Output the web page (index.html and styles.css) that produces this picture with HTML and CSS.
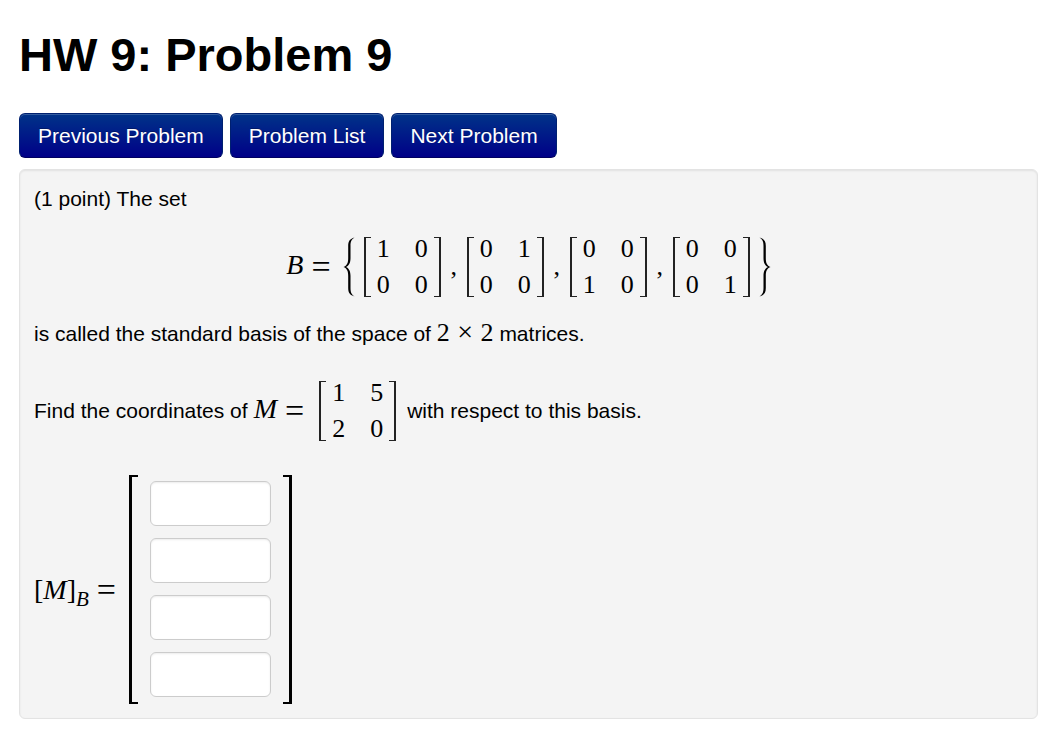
FILE: index.html
```html
<!DOCTYPE html>
<html lang="en">
<head>
    <meta charset="UTF-8">
    <meta name="viewport" content="width=device-width, initial-scale=1.0">
    <title>HW 9: Problem 9</title>
    <link rel="stylesheet" href="styles.css">
</head>
<body>
    <h1>HW 9: Problem 9</h1>

    <nav class="problem-nav">
        <button type="button" class="nav-btn">Previous Problem</button>
        <button type="button" class="nav-btn">Problem List</button>
        <button type="button" class="nav-btn">Next Problem</button>
    </nav>

    <form class="problem">
        <p>(1 point) The set</p>

        <div class="math display">
            <i class="var">B</i><span class="eq">=</span>
            <svg class="brace" viewBox="0 0 12 60"><path d="M11.500 0.600C7 2 5.200 4 5.200 9V21C5.200 26 4 28.500 0.500 30C4 31.500 5.200 34 5.200 39V51C5.200 56 7 58 11.500 59.400C8.600 57.500 7.500 55.500 7.500 51V39C7.500 34 6 31.500 3 30C6 28.500 7.500 26 7.500 21V9C7.500 4.500 8.600 2.500 11.500 0.600Z"/></svg>
            <span class="matrix"><span>1</span><span>0</span><span>0</span><span>0</span></span>
            <span class="comma">,</span>
            <span class="matrix"><span>0</span><span>1</span><span>0</span><span>0</span></span>
            <span class="comma">,</span>
            <span class="matrix"><span>0</span><span>0</span><span>1</span><span>0</span></span>
            <span class="comma">,</span>
            <span class="matrix"><span>0</span><span>0</span><span>0</span><span>1</span></span>
            <svg class="brace close" viewBox="0 0 12 60"><path d="M11.500 0.600C7 2 5.200 4 5.200 9V21C5.200 26 4 28.500 0.500 30C4 31.500 5.200 34 5.200 39V51C5.200 56 7 58 11.500 59.400C8.600 57.500 7.500 55.500 7.500 51V39C7.500 34 6 31.500 3 30C6 28.500 7.500 26 7.500 21V9C7.500 4.500 8.600 2.500 11.500 0.600Z"/></svg>
        </div>

        <p>is called the standard basis of the space of <span class="math">2 <span class="times">×</span> 2</span> matrices.</p>

        <div class="line">
            <span>Find the coordinates of</span>
            <span class="math inline"><i class="var">M</i><span class="eq">=</span><span class="matrix"><span>1</span><span>5</span><span>2</span><span>0</span></span></span>
            <span class="after">with respect to this basis.</span>
        </div>

        <div class="math answer">
            <span class="answer-name">[<i class="var">M</i>]<sub><i>B</i></sub></span><span class="eq">=</span>
            <div class="vector">
                <input type="text" aria-label="Row 1">
                <input type="text" aria-label="Row 2">
                <input type="text" aria-label="Row 3">
                <input type="text" aria-label="Row 4">
            </div>
        </div>
    </form>
</body>
</html>
```
FILE: styles.css
```css
*,
*::before,
*::after {
    box-sizing: border-box;
}

body {
    margin: 0;
    padding: 25px 19px 19px;
    background-color: #fff;
    color: #000;
    font-family: "Liberation Sans", Arial, sans-serif;
    font-size: 21px;
    line-height: 30px;
}

h1 {
    margin: 0 0 28px;
    font-size: 47px;
    line-height: 60px;
}

.problem-nav {
    display: flex;
    flex-wrap: wrap;
    gap: 7px;
    margin-bottom: 11px;
}

.nav-btn {
    padding: 6px 18px;
    border: 1px solid #002070;
    border-bottom-color: #000060;
    border-radius: 6px;
    background: linear-gradient(#003388, #000088);
    box-shadow: inset 0 1px 0 rgba(255, 255, 255, 0.2);
    color: #fff;
    font-family: inherit;
    font-size: 21px;
    line-height: 31px;
    text-shadow: 0 -1px 0 rgba(0, 0, 0, 0.25);
    cursor: pointer;
}

.problem {
    padding: 14px;
    border: 1px solid #e3e3e3;
    border-radius: 6px;
    background-color: #f4f4f4;
    box-shadow: inset 0 1px 2px rgba(0, 0, 0, 0.08);
}

p {
    margin: 0;
}

/* math */
.math {
    font-family: "Liberation Serif", "Times New Roman", serif;
    font-size: 26px;
}

p .math {
    line-height: 20px;
}

.var {
    font-size: 28px;
}

.eq {
    margin: 0 8px;
    font-size: 34px;
}

.times {
    margin: 0 1px;
    font-size: 28px;
}

.display {
    display: flex;
    align-items: center;
    justify-content: center;
    margin: 23px 0 22px;
}

/* keep the letters on the baseline next to the centered matrices */
.display > .var,
.inline > .var {
    margin-bottom: 5px;
}

.brace {
    width: 12px;
    height: 60px;
    margin: 0 9px 0 4px;
}

.brace.close {
    margin: 0 0 0 9px;
    transform: scaleX(-1);
}

.matrix {
    position: relative;
    display: grid;
    grid-template-columns: 13px 13px;
    grid-template-rows: 30px 30px;
    column-gap: 25px;
    row-gap: 6px;
    align-content: center;
    height: 60px;
    padding: 0 13px;
}

/* square brackets drawn at the two sides */
.matrix::before,
.matrix::after,
.vector::before,
.vector::after {
    content: "";
    position: absolute;
    top: 0;
    bottom: 0;
    left: 0;
    width: 7px;
    border: 1px solid #222;
    border-left-width: 2px;
    border-right: 0;
}

.matrix::after,
.vector::after {
    left: auto;
    right: 0;
    border-right: 2px solid #222;
    border-left: 0;
}

.comma {
    width: 26px;
    text-align: center;
}

.line {
    display: flex;
    align-items: center;
    margin: 32px 0 34px;
}

.inline {
    display: flex;
    align-items: center;
    margin-left: 6px;
}

.inline .matrix {
    margin-left: 7px;
}

.after {
    margin-left: 11px;
}

.answer {
    display: flex;
    align-items: center;
}

.answer-name {
    font-size: 28px;
}

sub {
    font-size: 21px;
    line-height: 0;
}

.vector {
    position: relative;
    display: flex;
    flex-direction: column;
    gap: 12px;
    margin-left: 5px;
    padding: 6px 21px 7px;
}

.vector::before,
.vector::after {
    width: 9px;
    border-width: 2px;
    border-color: #000;
}

.vector::before {
    border-left-width: 3px;
    border-right-width: 0;
}

.vector::after {
    border-right-width: 3px;
    border-left-width: 0;
}

.vector input {
    width: 121px;
    height: 45px;
    padding: 6px 9px;
    border: 1px solid #ccc;
    border-radius: 6px;
    background-color: #fff;
    box-shadow: inset 0 1px 2px rgba(0, 0, 0, 0.08);
    font-size: 21px;
}
```
